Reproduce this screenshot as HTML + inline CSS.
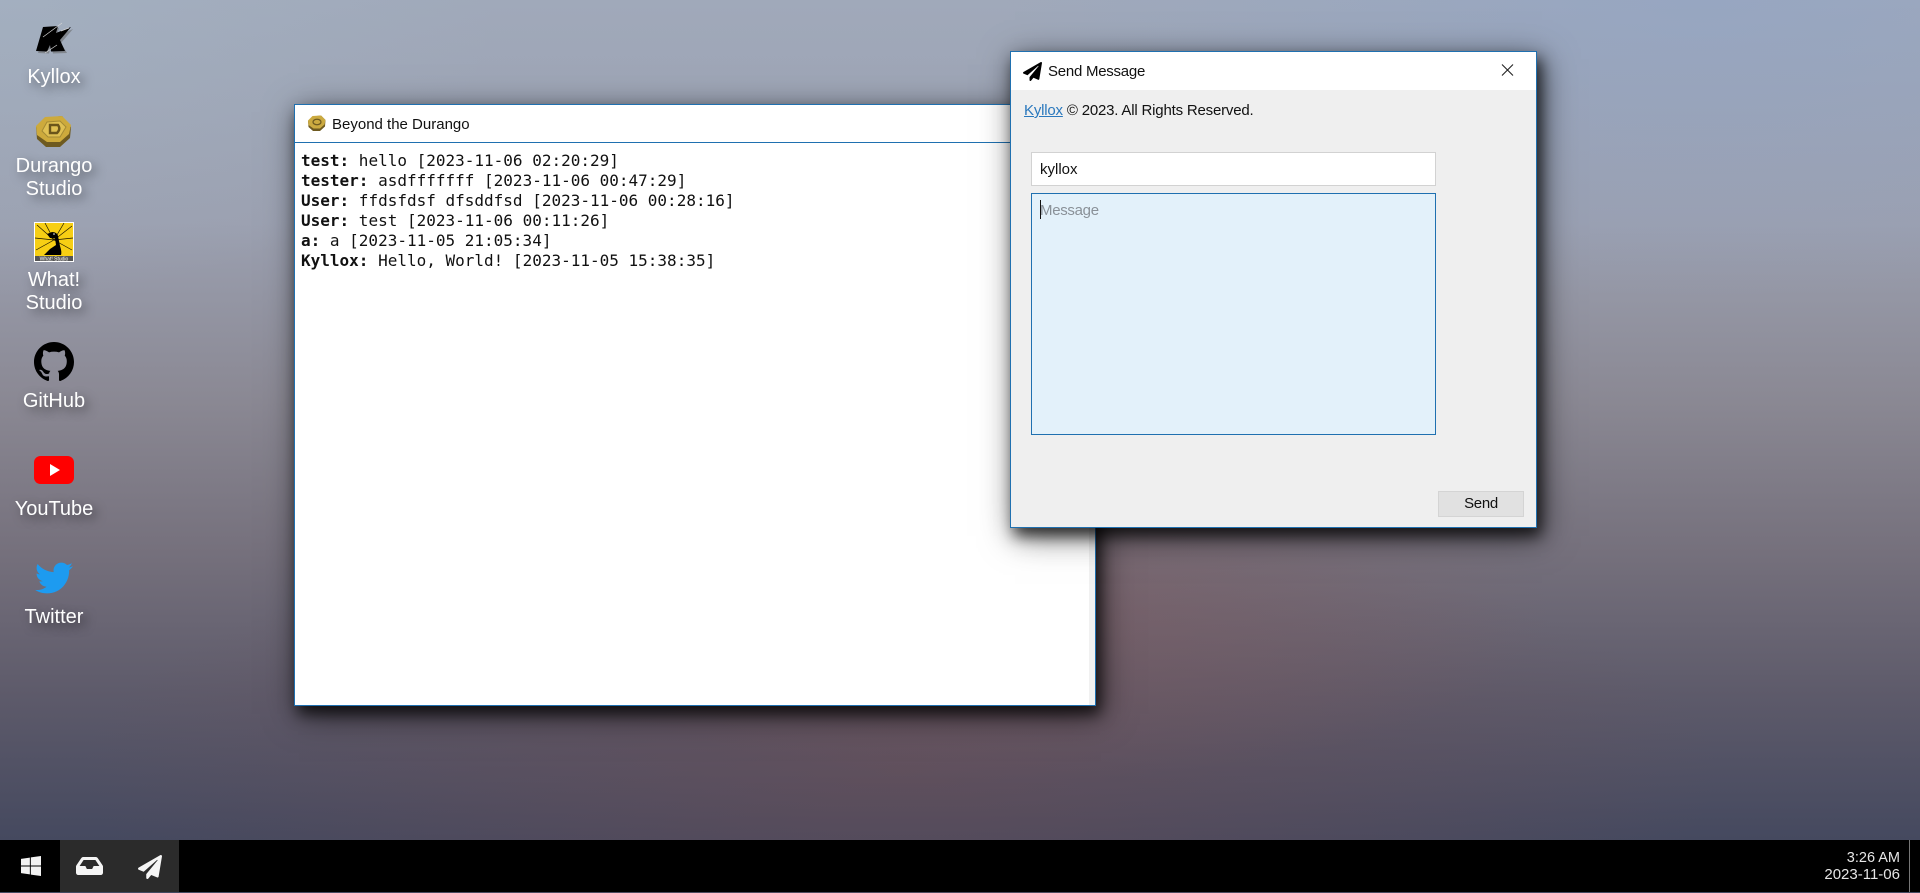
<!DOCTYPE html>
<html lang="en">
<head>
<meta charset="utf-8">
<title>Beyond the Durango</title>
<style>
html,body{margin:0;padding:0;width:1920px;height:893px;overflow:hidden}
body{position:relative;font-family:"Liberation Sans",sans-serif;background:
radial-gradient(ellipse 520px 170px at 1030px 610px,rgba(130,95,100,.5),transparent),
radial-gradient(ellipse 820px 250px at 900px 770px,rgba(110,78,85,.5),transparent),
radial-gradient(ellipse 700px 300px at 1700px 0,rgba(130,160,210,.3),transparent),
radial-gradient(ellipse 500px 300px at 0 0,rgba(170,190,205,.3),transparent),
linear-gradient(180deg,#a0a9ba 0,#9ba0b0 25%,#8a8893 45%,#75707c 62%,#5d5a6a 78%,#45495f 94%,#424a62 100%)}
.abs,.lbl,.win,.t{position:absolute}
.lbl{left:0;width:108px;text-align:center;color:#fff;font-size:20px;line-height:23px;text-shadow:4px 4px 10px rgba(0,0,0,.5)}
svg{position:absolute;display:block}
.win{background:#fff;border:1px solid #1f70b0;box-sizing:border-box;box-shadow:4px 8px 14px rgba(0,0,0,.7),5px 8px 32px rgba(0,0,0,.55)}
.t{white-space:nowrap;color:#111;font-size:15px;line-height:20px}
#log{position:absolute;left:301px;top:151px;font-family:"DejaVu Sans Mono",monospace;font-size:16px;line-height:20px;color:#111;white-space:pre}
#log b{font-weight:700}
#tb{position:absolute;left:0;top:840px;width:1920px;height:52px;background:#000}
</style>
</head>
<body>

<!-- desktop icons -->
<svg style="left:0;top:0" width="108" height="660" viewBox="0 0 108 660">
  <!-- Kyllox -->
  <polygon points="45,29 59,28 57,36 73,29 61,43 67,53 53,53.5 51,46 49,53.5 38,53" fill="#666" opacity=".55"/>
  <polygon points="43,27 58,26 56,33 71,27 60,40 65,51 51,51.5 50,45 47,51.5 36,51" fill="#000"/>
  <path d="M43 37L62 23M45 53L57 45M61 31L69 28" stroke="#d5d5d5" stroke-width=".7" fill="none"/>
  <!-- Durango coin -->
  <polygon points="45,118 62,116 71,127 70,138 60,147 46,147 37,139 36,127" fill="#6e5a20"/>
  <polygon points="45,117 62,116 71,125 69,134 60,142 47,142 37,135 36,126" fill="#cdaa3c"/>
  <polygon points="47,122 60,121 66,127 60,137 48,137 42,131" fill="#dfc052" stroke="#a48a34" stroke-width="1"/>
  <path d="M50 125L58 125Q61 129 57 133L50 133Z" fill="none" stroke="#6a551b" stroke-width="2.4"/>
  <!-- What! Studio -->
  <rect x="34" y="222" width="40" height="40" fill="#fff"/>
  <rect x="35" y="223" width="38" height="33" fill="#f7cf14"/>
  <path d="M54 240L37 225M54 240L45 223M54 240L64 223M54 240L72 226M54 240L73 238M54 240L72 250M54 240L35 238M54 240L36 250" stroke="#1a1400" stroke-width=".7"/>
  <path d="M47 234L52 232Q57 232 58 236L60 246Q62 252 61 255L44 255L50 249L56 245L55 238L50 238Z" fill="#000"/>
  <circle cx="54" cy="234" r=".8" fill="#fff"/>
  <rect x="35" y="256" width="38" height="5" fill="#555"/>
  <text x="54" y="260.5" font-family="Liberation Sans" font-size="5" fill="#fff" text-anchor="middle">What! Studio</text>
</svg>
<svg style="left:34px;top:342px" width="40" height="40" viewBox="0 0 16 16"><path fill="#000" d="M8 0C3.58 0 0 3.58 0 8c0 3.54 2.29 6.53 5.47 7.59.4.07.55-.17.55-.38 0-.19-.01-.82-.01-1.49-2.01.37-2.53-.49-2.69-.94-.09-.23-.48-.94-.82-1.13-.28-.15-.68-.52-.01-.53.63-.01 1.08.58 1.23.82.72 1.21 1.87.87 2.33.66.07-.52.28-.87.51-1.07-1.78-.2-3.64-.89-3.64-3.95 0-.87.31-1.59.82-2.15-.08-.2-.36-1.02.08-2.12 0 0 .67-.21 2.2.82.64-.18 1.32-.27 2-.27.68 0 1.36.09 2 .27 1.53-1.04 2.2-.82 2.2-.82.44 1.1.16 1.92.08 2.12.51.56.82 1.27.82 2.15 0 3.07-1.87 3.75-3.65 3.95.29.25.54.73.54 1.48 0 1.07-.01 1.93-.01 2.2 0 .21.15.46.55.38A8.013 8.013 0 0016 8c0-4.42-3.58-8-8-8z"/></svg>
<svg style="left:34px;top:456px" width="40" height="28" viewBox="0 0 40 28"><rect width="40" height="28" rx="6.5" fill="#f00"/><polygon points="16,8 16,20 26,14" fill="#fff"/></svg>
<svg style="left:35px;top:559px" width="38" height="38" viewBox="0 0 512 512"><path fill="#1d9bf0" d="M459.37 151.716c.325 4.548.325 9.097.325 13.645 0 138.72-105.583 298.558-298.558 298.558-59.452 0-114.68-17.219-161.137-47.106 8.447.974 16.568 1.299 25.34 1.299 49.055 0 94.213-16.568 130.274-44.832-46.132-.975-84.792-31.188-98.112-72.772 6.498.974 12.995 1.624 19.818 1.624 9.421 0 18.843-1.3 27.614-3.573-48.081-9.747-84.143-51.98-84.143-102.985v-1.299c13.969 7.797 30.214 12.67 47.431 13.319-28.264-18.843-46.781-51.005-46.781-87.391 0-19.492 5.197-37.36 14.294-52.954 51.655 63.675 129.3 105.258 216.365 109.807-1.624-7.797-2.599-15.918-2.599-24.04 0-57.828 46.782-104.934 104.934-104.934 30.213 0 57.502 12.67 76.67 33.137 23.715-4.548 46.456-13.32 66.599-25.34-7.798 24.366-24.366 44.833-46.132 57.827 21.117-2.273 41.584-8.122 60.426-16.243-14.292 20.791-32.161 39.308-52.628 54.253z"/></svg>

<div class="lbl" style="top:66px">Kyllox</div>
<div class="lbl" style="top:155px">Durango<br>Studio</div>
<div class="lbl" style="top:269px">What!<br>Studio</div>
<div class="lbl" style="top:390px">GitHub</div>
<div class="lbl" style="top:498px">YouTube</div>
<div class="lbl" style="top:606px">Twitter</div>

<!-- chat window -->
<div class="win" style="left:294px;top:104px;width:802px;height:602px"></div>
<div class="abs" style="left:295px;top:142px;width:800px;height:1px;background:#1f70b0"></div>
<div class="abs" style="left:1089px;top:143px;width:6px;height:562px;background:#f1f1f1"></div>
<svg style="left:308px;top:115px" width="18" height="17" viewBox="0 0 36 32">
  <polygon points="9,2 26,0 35,9 34,22 24,31 10,31 1,23 0,11" fill="#6e5a20"/>
  <polygon points="9,1 26,0 35,9 33,18 24,26 11,26 1,19 0,10" fill="#cbaa40"/>
  <ellipse cx="18" cy="13" rx="8" ry="5.5" fill="none" stroke="#6e5a20" stroke-width="2.5"/>
</svg>
<div class="t" style="left:332px;top:115px;font-size:15px">Beyond the Durango</div>
<div id="log"><b>test:</b> hello [2023-11-06 02:20:29]
<b>tester:</b> asdfffffff [2023-11-06 00:47:29]
<b>User:</b> ffdsfdsf dfsddfsd [2023-11-06 00:28:16]
<b>User:</b> test [2023-11-06 00:11:26]
<b>a:</b> a [2023-11-05 21:05:34]
<b>Kyllox:</b> Hello, World! [2023-11-05 15:38:35]</div>

<!-- send message window -->
<div class="win" style="left:1010px;top:51px;width:527px;height:477px;background:#efefef"></div>
<div class="abs" style="left:1011px;top:52px;width:525px;height:38px;background:#fff"></div>
<svg style="left:1023px;top:62px" width="19" height="19" viewBox="0 0 512 512"><path fill="#000" d="M476 3.2L12.5 270.6c-18.1 10.4-15.8 35.6 2.2 43.2L121 358.4l287.3-253.2c5.5-4.9 13.3 2.6 8.6 8.3L176 407v80.5c0 23.6 28.5 32.9 42.5 15.8L282 426l124.6 52.2c14.2 6 30.4-2.9 33-18.2l72-432C515 7.8 493.3-6.8 476 3.2z"/></svg>
<div class="t" style="left:1048px;top:62px;font-size:15px;letter-spacing:-.25px">Send Message</div>
<svg style="left:1501px;top:64px" width="13" height="12" viewBox="0 0 13 12"><path d="M1 .5L12 11.5M12 .5L1 11.5" stroke="#222" stroke-width="1.1" fill="none"/></svg>
<div class="t" style="left:1024px;top:101px;letter-spacing:-.19px;font-size:15px"><span style="color:#2a78bd;text-decoration:underline">Kyllox</span> © 2023. All Rights Reserved.</div>
<div class="abs" style="left:1031px;top:152px;width:405px;height:34px;background:#fff;border:1px solid #d2d2d2;box-sizing:border-box"></div>
<div class="t" style="left:1040px;top:160px;font-size:15px">kyllox</div>
<div class="abs" style="left:1031px;top:193px;width:405px;height:242px;background:#e3f1fa;border:1px solid #1f70b0;box-sizing:border-box"></div>
<div class="abs" style="left:1040px;top:200px;width:1px;height:19px;background:#111"></div>
<div class="t" style="left:1040px;top:201px;font-size:15px;letter-spacing:-.3px;color:#8a9198">Message</div>
<div class="abs" style="left:1438px;top:491px;width:86px;height:26px;background:#e1e1e1;border:1px solid #d4d4d4;box-sizing:border-box"></div>
<div class="t" style="left:1438px;top:494px;width:86px;text-align:center;font-size:15px;letter-spacing:-.3px">Send</div>

<!-- taskbar -->
<div id="tb"></div>
<div class="abs" style="left:60px;top:840px;width:119px;height:52px;background:#2b2b2b"></div>
<svg style="left:21px;top:856px" width="20" height="20" viewBox="0 0 21 21"><path fill="#f2f2f2" d="M0 3L9.3 1.7V10H0ZM10.3 1.5L21 0V10H10.3ZM0 11H9.3V19.3L0 18ZM10.3 11H21V21L10.3 19.5Z"/></svg>
<svg style="left:76px;top:854px" width="27" height="24" viewBox="0 0 576 512"><path fill="#f5f5f5" d="M567.938 243.908L462.25 85.374A48.003 48.003 0 0 0 422.311 64H153.689a48 48 0 0 0-39.938 21.374L8.062 243.908A47.994 47.994 0 0 0 0 270.533V400c0 26.51 21.49 48 48 48h480c26.51 0 48-21.49 48-48V270.533a47.994 47.994 0 0 0-8.062-26.625zM162.252 128h251.497l85.333 128H376l-32 64H232l-32-64H76.918l85.334-128z"/></svg>
<svg style="left:138px;top:855px" width="24" height="24" viewBox="0 0 512 512"><path fill="#f5f5f5" d="M476 3.2L12.5 270.6c-18.1 10.4-15.8 35.6 2.2 43.2L121 358.4l287.3-253.2c5.5-4.9 13.3 2.6 8.6 8.3L176 407v80.5c0 23.6 28.5 32.9 42.5 15.8L282 426l124.6 52.2c14.2 6 30.4-2.9 33-18.2l72-432C515 7.8 493.3-6.8 476 3.2z"/></svg>
<div class="t" style="right:20px;top:848px;color:#e6e6e6;font-size:14.5px;text-align:right">3:26 AM</div>
<div class="t" style="right:20px;top:865px;color:#e6e6e6;font-size:15px;text-align:right">2023-11-06</div>
<div class="abs" style="left:1909px;top:840px;width:1px;height:52px;background:#777"></div>
</body>
</html>
